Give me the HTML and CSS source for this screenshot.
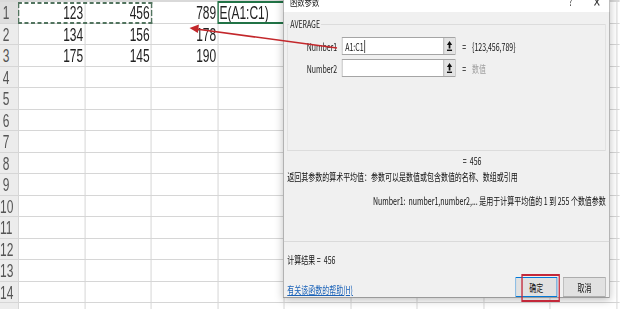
FILE: index.html
```html
<!DOCTYPE html>
<html lang="zh-CN">
<head>
    <meta charset="UTF-8">
    <meta name="viewport" content="width=device-width, initial-scale=1.0">
    <title>函数参数</title>
    <link rel="stylesheet" href="styles.css">
</head>
<body>
    <div class="screen">
        <!-- Worksheet -->
        <div class="sheet">
            <div class="col-strip"></div>
            <div class="row sel">
                <div class="rh">1</div>
                <div class="c">123</div>
                <div class="c">456</div>
                <div class="c">789</div>
                <div class="c edit">E(A1:C1)</div>
            </div>
            <div class="row">
                <div class="rh">2</div>
                <div class="c">134</div>
                <div class="c">156</div>
                <div class="c">178</div>
            </div>
            <div class="row">
                <div class="rh">3</div>
                <div class="c">175</div>
                <div class="c">145</div>
                <div class="c">190</div>
            </div>
            <div class="row"><div class="rh">4</div></div>
            <div class="row"><div class="rh">5</div></div>
            <div class="row"><div class="rh">6</div></div>
            <div class="row"><div class="rh">7</div></div>
            <div class="row"><div class="rh">8</div></div>
            <div class="row"><div class="rh">9</div></div>
            <div class="row"><div class="rh">10</div></div>
            <div class="row"><div class="rh">11</div></div>
            <div class="row"><div class="rh">12</div></div>
            <div class="row"><div class="rh">13</div></div>
            <div class="row"><div class="rh">14</div></div>
            <div class="row"><div class="rh"></div></div>

            <!-- copy range A1:C1 -->
            <div class="ants"></div>
        </div>

        <!-- Function Arguments dialog -->
        <div class="dialog">
            <div class="titlebar">
                <span class="title">函数参数</span>
                <span class="tb-btn help-q">?</span>
                <span class="tb-btn close">✕</span>
            </div>
            <div class="dlg-body">
                <fieldset class="group">
                    <legend>AVERAGE</legend>
                    <div class="arg">
                        <label>Number1</label>
                        <div class="ref-box">
                            <span class="val">A1:C1</span><span class="caret"></span>
                            <span class="pick">
                                <svg width="8" height="10" viewBox="0 0 8 10"><path d="M4 0 L8 4 H5.3 V7.6 H2.7 V4 H0 Z" fill="#111"/><rect x="0" y="8.6" width="8" height="1.4" fill="#111"/></svg>
                            </span>
                        </div>
                        <span class="eq">=</span>
                        <span class="res">{123,456,789}</span>
                    </div>
                    <div class="arg">
                        <label>Number2</label>
                        <div class="ref-box">
                            <span class="val"></span>
                            <span class="pick">
                                <svg width="8" height="10" viewBox="0 0 8 10"><path d="M4 0 L8 4 H5.3 V7.6 H2.7 V4 H0 Z" fill="#111"/><rect x="0" y="8.6" width="8" height="1.4" fill="#111"/></svg>
                            </span>
                        </div>
                        <span class="eq">=</span>
                        <span class="res hint">数值</span>
                    </div>
                </fieldset>

                <div class="total">= &nbsp;456</div>
                <p class="desc">返回其参数的算术平均值：参数可以是数值或包含数值的名称、数组或引用</p>
                <p class="arg-desc">Number1:&nbsp; number1,number2,... 是用于计算平均值的 1 到 255 个数值参数</p>

                <hr class="sep">

                <div class="result">计算结果 = &nbsp;456</div>

                <div class="footer">
                    <a class="help" href="#">有关该函数的帮助(H)</a>
                    <div class="btns">
                        <button class="btn ok">确定</button>
                        <button class="btn">取消</button>
                    </div>
                </div>
            </div>
        </div>
    </div>

    <!-- red annotation arrow -->
    <svg class="arrow" width="620" height="309" viewBox="0 0 620 309">
        <line x1="337" y1="48" x2="196" y2="29" stroke="#c3272b" stroke-width="1.6"/>
        <polygon points="189.5,28 198.9,24.6 197.9,33" fill="#c3272b"/>
    </svg>
</body>
</html>
```

FILE: styles.css
```css
:root {
    --grid: #d6d6d6;
    --excel-green: #217346;
    --dlg-bg: #f0f0f0;
}

* {
    margin: 0;
    padding: 0;
    box-sizing: border-box;
}

html {
    overflow: hidden;
}

body {
    width: 620px;
    height: 309px;
    overflow: hidden;
    position: relative;
    background: #fff;
}

/* the capture is squeezed horizontally, so lay out wide and squeeze */
.screen {
    position: relative;
    width: 932px;
    height: 309px;
    overflow: hidden;
    transform: scaleX(.665);
    transform-origin: 0 0;
}

/* ---------- worksheet ---------- */
.sheet {
    position: relative;
    font-family: 'Liberation Sans', Arial, sans-serif;
    font-size: 18px;
    color: #222;
    background-image: repeating-linear-gradient(to right, transparent 0 98.5px, var(--grid) 98.5px 100px);
    background-position: 28px 0;
}

.col-strip {
    height: 2px;
    background: #d9d9d9;
}

.row {
    display: flex;
    height: 21.5px;
    border-bottom: 1px solid var(--grid);
}

.rh {
    width: 28px;
    flex: none;
    padding-right: 10px;
    text-align: center;
    line-height: 23px;
    color: #555;
    background: linear-gradient(to left, #bdbdbd 1.5px, #ececec 1.5px);
}

.row.sel .rh {
    background: linear-gradient(to left, #bdbdbd 1.5px, #dedede 1.5px);
}

.c {
    width: 100px;
    flex: none;
    padding-right: 3px;
    text-align: right;
    line-height: 23px;
    overflow: hidden;
    white-space: nowrap;
}

.c.edit {
    text-align: left;
    padding-left: 2px;
    outline: 2px solid var(--excel-green);
    outline-offset: -1px;
}

.ants {
    position: absolute;
    left: 27px;
    top: 2px;
    width: 202px;
    height: 22px;
    border: 2px dashed #52745f;
}

/* ---------- dialog ---------- */
.dialog {
    position: absolute;
    left: 426px;
    top: -12px;
    width: 491px;
    height: 310px;
    background: var(--dlg-bg);
    border: 1px solid #9a9a9a;
    box-shadow: 0 2px 10px rgba(0, 0, 0, 0.25);
    font-family: 'Noto Sans CJK SC', 'Liberation Sans', sans-serif;
    font-size: 10.5px;
    color: #111;
}

.titlebar {
    display: flex;
    align-items: center;
    height: 23px;
    padding: 0 6px 0 9px;
    background: #fff;
}

.title {
    flex: 1;
    font-size: 11px;
    color: #222;
}

.tb-btn {
    width: 26px;
    text-align: center;
    font-size: 12px;
    color: #333;
}

.tb-btn.close {
    margin-left: 13px;
    font-size: 14px;
}

.dlg-body {
    padding: 0 5px 4px;
}

.group {
    margin-top: 5px;
    padding: 6px 0 69px;
    border: 1px solid #dcdcdc;
    min-width: 0;
}

.group legend {
    margin-left: 1.5px;
    padding: 0 2px;
    line-height: 14px;
    color: #222;
}

.arg {
    display: flex;
    align-items: center;
    height: 18px;
    margin-bottom: 4px;
}

.arg label {
    width: 74px;
    text-align: right;
    color: #222;
}

.ref-box {
    display: flex;
    align-items: center;
    width: 171px;
    height: 18px;
    margin-left: 7px;
    background: #fff;
    border: 1px solid #a5a5a5;
}

.val {
    padding-left: 4px;
    color: #111;
}

.caret {
    width: 1.5px;
    height: 13px;
    margin-left: 1px;
    background: #000;
}

.pick {
    display: flex;
    align-items: center;
    justify-content: center;
    width: 16px;
    height: 100%;
    margin-left: auto;
    background: #e3e3e3;
    box-shadow: -1.5px 0 0 #b4b4b4;
}

.eq {
    margin-left: 10px;
}

.res {
    margin-left: 9px;
}

.res.hint {
    color: #a0a0a0;
}

.total {
    margin-top: 3px;
    padding-left: 264px;
    line-height: 14px;
}

.desc {
    margin-top: 2px;
    line-height: 14px;
}

.arg-desc {
    margin-top: 10px;
    line-height: 14px;
    text-align: right;
    white-space: nowrap;
}

.sep {
    margin: 33px -5px 0;
    border: none;
    border-top: 1px solid #dadada;
}

.result {
    margin-top: 11px;
    line-height: 14px;
}

.footer {
    display: flex;
    align-items: center;
    height: 20px;
    margin-top: 10px;
}

.help {
    padding-top: 4px;
    color: #1a62b8;
    text-decoration: underline;
}

.btns {
    display: flex;
    gap: 9px;
    margin-left: auto;
}

.btn {
    width: 64px;
    height: 20px;
    font: inherit;
    color: #111;
    background: #e1e1e1;
    border: 1px solid #adadad;
    border-width: 1px 1.5px;
}

.btn.ok {
    position: relative;
    width: 63px;
    border-color: #0078d7;
}

/* red box drawn over the OK button */
.btn.ok::after {
    content: "";
    position: absolute;
    left: 8px;
    top: -4px;
    width: 54px;
    height: 24px;
    border: 2px solid #c3283a;
}

/* ---------- annotation ---------- */
.arrow {
    position: absolute;
    left: 0;
    top: 0;
    pointer-events: none;
}
```
